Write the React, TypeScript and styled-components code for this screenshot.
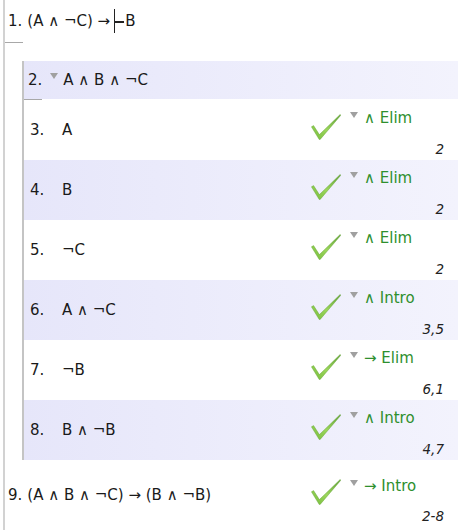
import styled, { createGlobalStyle } from "styled-components";

const GlobalStyle = createGlobalStyle`
  html, body {
    margin: 0;
    padding: 0;
    background: #ffffff;
  }
  body {
    font-family: "DejaVu Sans", Verdana, sans-serif;
    font-size: 15px;
    color: #1a1a1a;
  }
`;

const Proof = styled.div`
  margin-left: 3px;
  min-height: 530px;
  border-left: 2px solid #d2d2d2;
  display: flex;
  flex-direction: column;
`;

const TopLine = styled.div`
  height: 42px;
  display: flex;
  align-items: center;
  padding-left: 3px;
  white-space: pre;
`;

const FitchBar = styled.div<{ $w: number; $after?: number }>`
  width: ${(p) => p.$w}px;
  height: 1px;
  background: #a8a8a8;
  margin-bottom: ${(p) => p.$after ?? 0}px;
`;

const Num = styled.span<{ $w?: number }>`
  display: inline-block;
  width: ${(p) => (p.$w ? `${p.$w}px` : "auto")};
  margin-right: ${(p) => (p.$w ? 0 : 5)}px;
`;

/* the "assumes" turnstile drawn as a tall bar with a short tick */
const Turnstile = styled.span`
  display: inline-block;
  position: relative;
  width: 9px;
  height: 24px;
  margin-left: 4px;
  margin-right: 1px;
  border-left: 1.5px solid #222;
  &::after {
    content: "";
    position: absolute;
    left: 0;
    top: 12px;
    width: 9px;
    height: 1.5px;
    background: #222;
  }
`;

const Subproof = styled.div`
  margin-left: 17px;
  border-left: 2px solid #c4c4c4;
  display: flex;
  flex-direction: column;
`;

const Assumption = styled.div`
  height: 38px;
  display: flex;
  align-items: center;
  padding-left: 4px;
  white-space: pre;
  background: linear-gradient(to right, #e6e6fa, #f3f3fd);
`;

const Tri = styled.span`
  display: inline-block;
  width: 0;
  height: 0;
  border-left: 4px solid transparent;
  border-right: 4px solid transparent;
  border-top: 6px solid #a0a0a0;
`;

const AssumeTri = styled(Tri)`
  margin: 0 5px 8px 3px;
`;

const Line = styled.div<{ $shade?: boolean; $h: number }>`
  height: ${(p) => p.$h}px;
  display: flex;
  align-items: flex-start;
  background: ${(p) =>
    p.$shade ? "linear-gradient(to right, #e6e6fa, #f3f3fd)" : "#ffffff"};
`;

const Formula = styled.div<{ $lead: number }>`
  align-self: center;
  padding-left: ${(p) => p.$lead}px;
  flex: 1;
  display: flex;
  align-items: center;
  white-space: pre;
`;

const Just = styled.div<{ $top: number }>`
  width: 133px;
  padding-right: 14px;
  padding-top: ${(p) => p.$top}px;
  display: flex;
  align-items: flex-start;
`;

const Check = styled.svg<{ $off: number }>`
  width: 30px;
  height: 26px;
  margin-top: ${(p) => p.$off}px;
  margin-right: 9px;
  flex-shrink: 0;
`;

const RuleCol = styled.div`
  flex: 1;
  display: flex;
  flex-direction: column;
`;

const RuleLine = styled.div`
  display: flex;
  align-items: flex-start;
  height: 18px;
  line-height: 18px;
  color: #2e8f2e;
  font-size: 15px;
  white-space: pre;
`;

const RuleTri = styled(Tri)`
  margin: 3px 6px 0 0;
`;

const Cite = styled.div<{ $gap: number }>`
  align-self: flex-end;
  margin-top: ${(p) => p.$gap}px;
  font-style: italic;
  font-size: 13.5px;
  line-height: 16px;
  color: #222;
`;

function CheckMark({ off }: { off: number }) {
  return (
    <Check $off={off} viewBox="0 0 30 26">
      <defs>
        <linearGradient id="ck" x1="0" y1="1" x2="1" y2="0">
          <stop offset="0" stopColor="#74bb3a" />
          <stop offset="0.45" stopColor="#9cd65c" />
          <stop offset="1" stopColor="#5e9f33" />
        </linearGradient>
      </defs>
      <path
        d="M0.4 12.8 L2.6 11.6 L8.4 20.6 L29.2 0.4 L29.8 1.3 L9.2 25.4 L8.2 25.5 Z"
        fill="url(#ck)"
        stroke="#5f9f33"
        strokeWidth="0.4"
        strokeLinejoin="round"
      />
    </Check>
  );
}

type Row = {
  n: string;
  f: string;
  rule: string;
  cite: string;
};

const rows: Row[] = [
  { n: "3.", f: "A", rule: "∧ Elim", cite: "2" },
  { n: "4.", f: "B", rule: "∧ Elim", cite: "2" },
  { n: "5.", f: "¬C", rule: "∧ Elim", cite: "2" },
  { n: "6.", f: "A ∧ ¬C", rule: "∧ Intro", cite: "3,5" },
  { n: "7.", f: "¬B", rule: "→ Elim", cite: "6,1" },
  { n: "8.", f: "B ∧ ¬B", rule: "∧ Intro", cite: "4,7" },
];

function Justification({
  rule,
  cite,
  top,
  off,
  gap,
}: {
  rule: string;
  cite: string;
  top: number;
  off: number;
  gap: number;
}) {
  return (
    <Just $top={top}>
      <CheckMark off={off} />
      <RuleCol>
        <RuleLine>
          <RuleTri />
          {rule}
        </RuleLine>
        <Cite $gap={gap}>{cite}</Cite>
      </RuleCol>
    </Just>
  );
}

export default function App() {
  return (
    <>
      <GlobalStyle />
      <Proof>
        <TopLine>
          <Num>1.</Num>
          (A ∧ ¬C) →<Turnstile />B
        </TopLine>
        <FitchBar $w={18} $after={18} />
        <Subproof>
          <Assumption>
            <Num>2.</Num>
            <AssumeTri />A ∧ B ∧ ¬C
          </Assumption>
          <FitchBar $w={18} />
          {rows.map((r, i) => (
            <Line key={r.n} $shade={i % 2 === 1} $h={60}>
              <Formula $lead={6}>
                <Num $w={32}>{r.n}</Num>
                {r.f}
              </Formula>
              <Justification rule={r.rule} cite={r.cite} top={9} off={5} gap={14} />
            </Line>
          ))}
        </Subproof>
        <Line $h={69}>
          <Formula $lead={3}>
            <Num>9.</Num>
            (A ∧ B ∧ ¬C) → (B ∧ ¬B)
          </Formula>
          <Justification rule="→ Intro" cite="2-8" top={17} off={2} gap={13} />
        </Line>
      </Proof>
    </>
  );
}
